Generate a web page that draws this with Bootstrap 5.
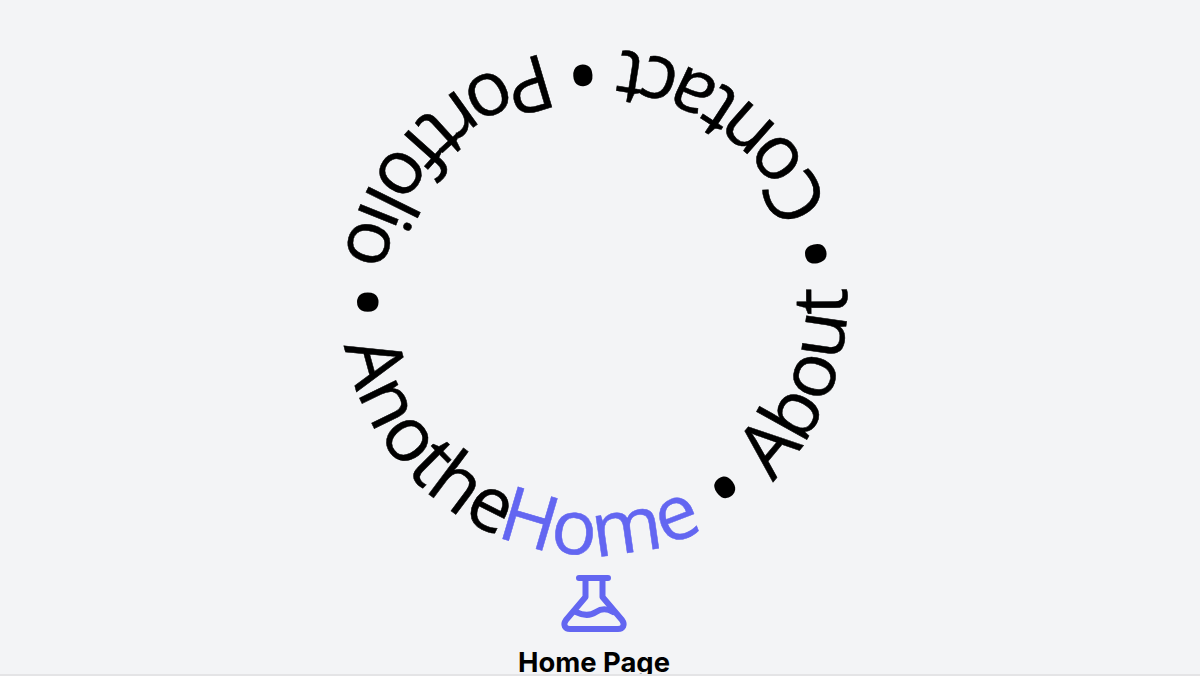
<!DOCTYPE html>
<html lang="en">
<head>
<meta charset="utf-8">
<title>Home Page</title>
<link href="https://cdn.jsdelivr.net/npm/bootstrap@5.3.0/dist/css/bootstrap.min.css" rel="stylesheet">
<style>
html, body { height: 100%; overflow: hidden; background: #f3f4f6; }
.stage { width: 1188px; height: 676px; overflow: hidden; }
.edge { height: 2px; background: #e4e4e6; }
.ring { width: 560px; height: 574px; display: block; flex: none; }
.ring text { font-family: "Open Sans", "Noto Sans", sans-serif; font-size: 76px; font-weight: 400; fill: #000; stroke: #000; stroke-width: .5px; }
.ring .now { fill: #6366f1; stroke: #6366f1; }
.ring .dot { font-size: 92px; stroke: none; }
.flask { width: 70px; height: 64px; display: block; flex: none; }
.flask path { fill: none; stroke: #6366f1; stroke-width: 6; stroke-linecap: round; stroke-linejoin: round; }
.caption { font-family: Inter, "Liberation Sans", sans-serif; font-weight: 700; font-size: 27.4px; line-height: 32px; color: #000; white-space: nowrap; }
</style>
</head>
<body class="m-0 position-relative">
<main class="stage d-flex flex-column align-items-center">
  <svg class="ring" viewBox="313 0 560 574" role="img" aria-label="Circular navigation">
    <defs><path id="orbit" d="M593 49 A253 253 0 0 0 593 555 A253 253 0 0 0 593 49"/></defs>
    <g transform="rotate(-1.5 593 302)"><text class="now"><textPath href="#orbit" startOffset="50%" text-anchor="middle">Home</textPath></text></g>
    <g transform="rotate(-35.2 593 302)"><text class="dot" dy="7.5"><textPath href="#orbit" startOffset="50%" text-anchor="middle">•</textPath></text></g>
    <g transform="rotate(-69 593 302)"><text><textPath href="#orbit" startOffset="50%" text-anchor="middle">About</textPath></text></g>
    <g transform="rotate(-102.3 593 302)"><text class="dot" dy="7.5"><textPath href="#orbit" startOffset="50%" text-anchor="middle">•</textPath></text></g>
    <g transform="rotate(-143 593 302)"><text><textPath href="#orbit" startOffset="50%" text-anchor="middle">Contact</textPath></text></g>
    <g transform="rotate(-182.8 593 302)"><text class="dot" dy="7.5"><textPath href="#orbit" startOffset="50%" text-anchor="middle">•</textPath></text></g>
    <g transform="rotate(-226 593 302)"><text><textPath href="#orbit" startOffset="50%" text-anchor="middle">Portfolio</textPath></text></g>
    <g transform="rotate(90 593 302)"><text class="dot" dy="7.5"><textPath href="#orbit" startOffset="50%" text-anchor="middle">•</textPath></text></g>
    <g transform="rotate(51 593 302)"><text><textPath href="#orbit" startOffset="50%" text-anchor="middle">Anothe</textPath></text></g>
  </svg>
  <svg class="flask" viewBox="559 574 70 64" aria-hidden="true">
    <path d="M579 578H608M585.500 578V597L566 620C562.500 625 565 629 570 629H618C623 629 625.500 625 622 620L602.500 597V578"/>
    <path d="M576 612C584 616 590 616 596 612C602 608 608 609 613 612"/>
  </svg>
  <div class="caption mt-2">Home Page</div>
</main>
<div class="edge position-absolute bottom-0 start-0 end-0"></div>
<script src="https://cdn.jsdelivr.net/npm/bootstrap@5.3.0/dist/js/bootstrap.bundle.min.js"></script>
</body>
</html>
